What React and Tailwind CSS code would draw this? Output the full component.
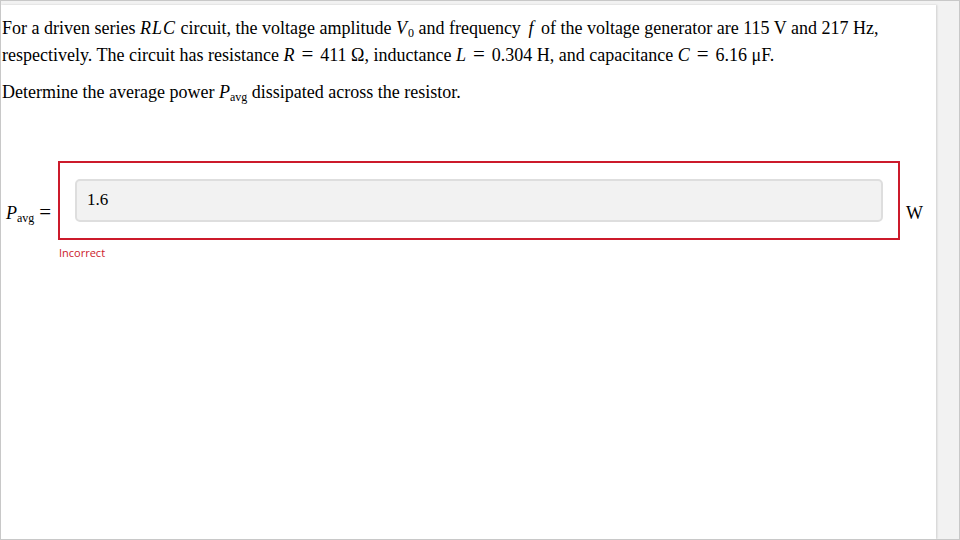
export default function App() {
  const serif = { fontFamily: '"Liberation Serif", "Times New Roman", serif' }
  const Eq = () => <span className="mx-[7px] text-[21px] leading-none">=</span>
  return (
    <div className="w-[960px] h-[540px] bg-[#f2f2f2] border-t border-l border-r border-b border-[#c8c8c8] overflow-hidden">
      <div className="flex h-full pt-1">
        {/* Main card */}
        <div
          className="w-[935px] h-full bg-white shadow-[1px_0_2px_rgba(0,0,0,0.15)] text-[18px] text-black leading-[27px]"
          style={serif}
        >
          <p className="pl-px pt-[10px]">
            For a driven series <i className="tracking-[1px]">RLC</i> circuit, the voltage amplitude{' '}
            <i className="mr-px">V</i><sub className="text-[12px] not-italic">0</sub> and frequency{' '}
            <i className="mx-[3px]">f</i> of the voltage generator are 115 V and 217 Hz,
            <br />
            respectively. The circuit has resistance <i>R</i>
            <Eq />
            411 Ω, inductance <i>L</i>
            <Eq />
            0.304 H, and capacitance <i>C</i>
            <Eq />
            6.16 μF.
          </p>
          <p className="pl-px mt-[10px]">
            Determine the average power <i>P</i>
            <sub className="text-[12px]">avg</sub> dissipated across the resistor.
          </p>

          {/* Answer row */}
          <div className="flex items-start mt-[55px]">
            <div className="w-[57px] pl-[5px] pt-[39px] flex items-baseline">
              <i>P</i>
              <sub className="text-[12px]">avg</sub>
              <span className="ml-[5px] text-[21px] leading-none">=</span>
            </div>
            <div>
              <div className="w-[842px] h-[79px] border-2 border-[#cc1a2b] px-[15px] pt-[16px]">
                <div className="h-[43px] bg-[#f2f2f2] border-2 border-[#dedede] rounded-[5px] px-[10px] flex items-center pb-[2px] text-[17px]">
                  1.6
                </div>
              </div>
              <div
                className="text-[11px] leading-[15px] text-[#cc1a2b] mt-[5px] pl-px"
                style={{ fontFamily: '"Open Sans", "Noto Sans", sans-serif' }}
              >
                Incorrect
              </div>
            </div>
            <div className="pl-[6px] pt-[39px]">W</div>
          </div>
        </div>
      </div>
    </div>
  )
}
